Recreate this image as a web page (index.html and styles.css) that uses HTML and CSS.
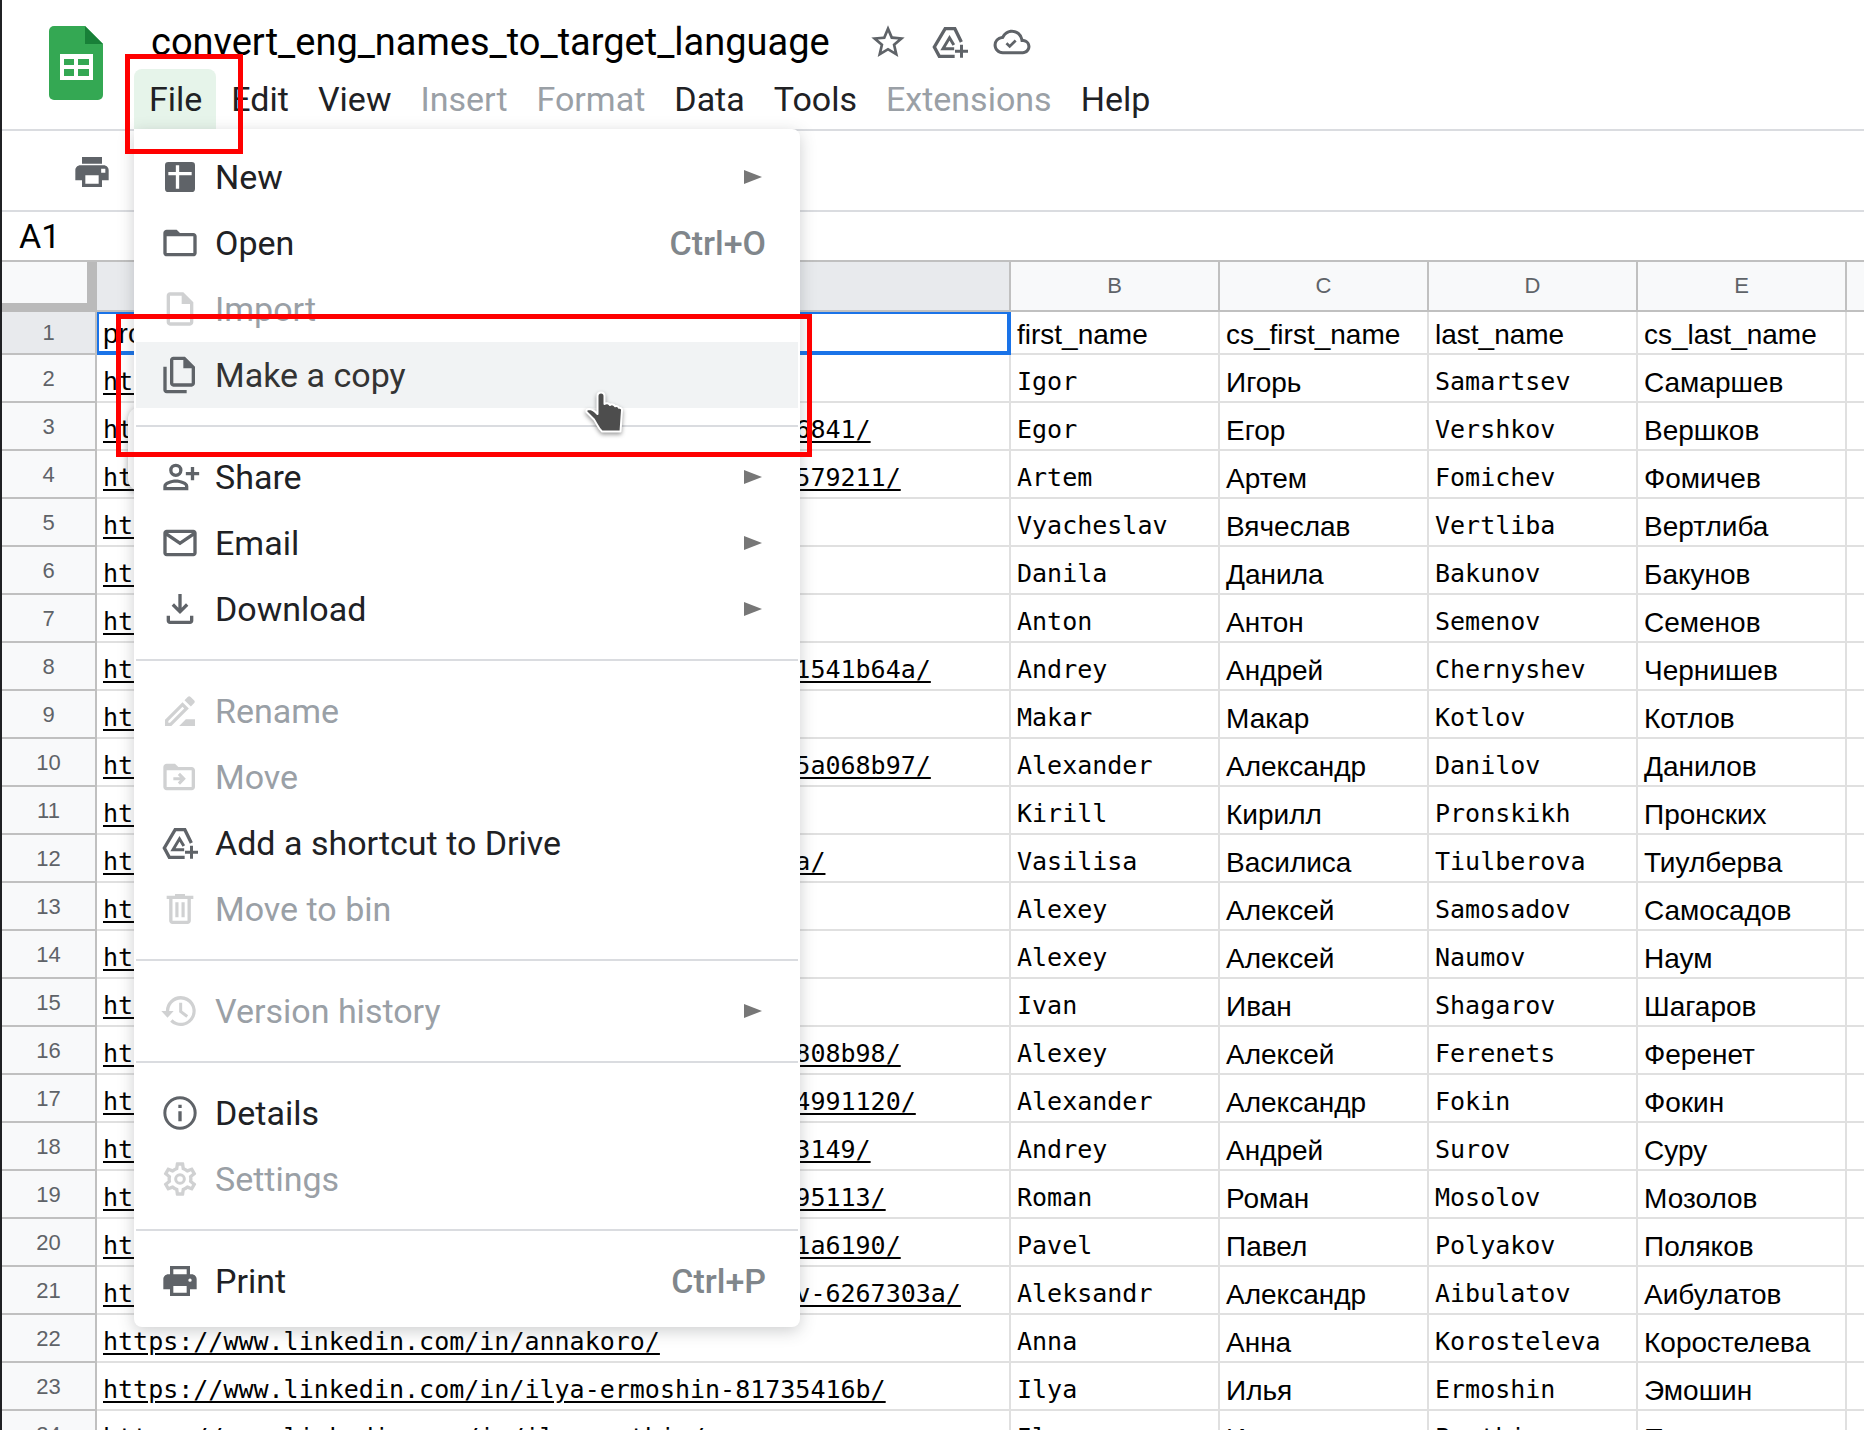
FILE: index.html
```html
<!DOCTYPE html>
<html lang="en">
<head>
    <meta charset="UTF-8">
    <meta name="viewport" content="width=device-width, initial-scale=1.0">
    <title>convert_eng_names_to_target_language</title>
    <link rel="stylesheet" href="styles.css">
</head>
<body>

<!-- Shared icon shapes -->
<svg class="sprite" aria-hidden="true">
    <symbol id="drive-add" viewBox="0 0 24 24">
        <path d="M18.800 12L14.900 4H9.100L2.600 15l3 5.600h9.200" fill="none" stroke="currentColor" stroke-width="2"/>
        <path d="M14.500 16H7.800l3.900-6.500 2.600 4.300" fill="none" stroke="currentColor" stroke-width="1.800"/>
        <path d="M18 13.600v3h-3v1.800h3v3h1.800v-3h3v-1.800h-3v-3z" fill="currentColor"/>
    </symbol>
</svg>

<div id="app">
    <header class="header">
        <svg class="logo" viewBox="0 0 54 74">
            <path d="M5 0h31l18 18v51a5 5 0 0 1-5 5H5a5 5 0 0 1-5-5V5a5 5 0 0 1 5-5z" fill="#34a853"/>
            <path d="M36 0l18 18H36z" fill="#188038"/>
            <path d="M11 28h33v26H11zM15 33v6h10v-6zM29 33v6h11v-6zM15 43v7h10v-7zM29 43v7h11v-7z" fill="#fff" fill-rule="evenodd"/>
        </svg>
        <div class="heading">
            <div class="title-row">
                <h1>convert_eng_names_to_target_language</h1>
                <button class="icon-btn" aria-label="Star">
                    <svg viewBox="0 0 24 24"><path d="M22 9.24l-7.19-.62L12 2 9.19 8.63 2 9.24l5.46 4.73L5.82 21 12 17.27 18.18 21l-1.63-7.03L22 9.24zM12 15.4l-3.76 2.27 1-4.28-3.32-2.88 4.38-.38L12 6.1l1.71 4.04 4.38.38-3.32 2.88 1 4.28L12 15.4z"/></svg>
                </button>
                <button class="icon-btn" aria-label="Add shortcut"><svg><use href="#drive-add"/></svg></button>
                <button class="icon-btn" aria-label="Document status">
                    <svg viewBox="-1 0 26 24"><path d="M19.350 10.040A7.490 7.490 0 0 0 12 4C9.110 4 6.600 5.640 5.350 8.040A5.994 5.994 0 0 0 0 14c0 3.310 2.690 6 6 6h13c2.760 0 5-2.240 5-5 0-2.640-2.050-4.780-4.650-4.960zM19 18H6c-2.210 0-4-1.790-4-4 0-2.050 1.530-3.760 3.560-3.970l1.070-.11.5-.95A5.469 5.469 0 0 1 12 6c2.620 0 4.880 1.860 5.390 4.430l.3 1.500 1.530.11A2.980 2.980 0 0 1 22 15c0 1.650-1.350 3-3 3zm-8.500-4.300l-1.500-1.500-1.200 1.200 2.700 2.700 4.500-4.500-1.200-1.200z"/></svg>
                </button>
            </div>
            <nav class="menubar">
                <div class="menu-root">
                    <button class="active">File</button>

                    <div class="hint"></div>
                    <div class="menu">
                        <button class="item">
                            <svg viewBox="0 0 24 24"><path d="M5 3h14a2 2 0 0 1 2 2v14a2 2 0 0 1-2 2H5a2 2 0 0 1-2-2V5a2 2 0 0 1 2-2zM9.500 5v4H5v2h4.500v8h2v-8H19V9h-7.500V5z"/></svg>
                            <span>New</span><i class="arrow"></i>
                        </button>
                        <button class="item">
                            <svg viewBox="0 0 24 24"><path d="M20 6h-8l-2-2H4c-1.100 0-2 .9-2 2v12c0 1.100.9 2 2 2h16c1.100 0 2-.9 2-2V8c0-1.100-.9-2-2-2zm0 12H4V8h16v10z"/></svg>
                            <span>Open</span><kbd>Ctrl+O</kbd>
                        </button>
                        <button class="item" disabled>
                            <svg viewBox="0 0 24 24"><path d="M14 2H6c-1.100 0-2 .9-2 2v16c0 1.100.9 2 2 2h12c1.100 0 2-.9 2-2V8l-6-6zM6 20V4h7v5h5v11H6z"/></svg>
                            <span>Import</span>
                        </button>
                        <button class="item hover">
                            <svg viewBox="0 0 24 24"><path d="M15 1H8C6.900 1 6 1.900 6 3v14c0 1.100.9 2 2 2h11c1.100 0 2-.9 2-2V7l-6-6zM8 17V3h6v5h5v9H8zM4 7H2v14c0 1.100.9 2 2 2h12v-2H4V7z"/></svg>
                            <span>Make a copy</span>
                        </button>
                        <hr>
                        <button class="item">
                            <svg viewBox="0 0 24 24"><path d="M9.500 12a4 4 0 1 0 0-8 4 4 0 0 0 0 8zm0-6a2 2 0 1 1 0 4 2 2 0 0 1 0-4zM9.500 13.500C6.800 13.500 2 14.800 2 17.500V20h15v-2.500c0-2.700-4.800-4-7.500-4zM15 18H4v-.5c0-.7 2.700-2 5.500-2s5.500 1.300 5.500 2zM18.500 6v3h-3v2h3v3h2v-3h3V9h-3V6z"/></svg>
                            <span>Share</span><i class="arrow"></i>
                        </button>
                        <button class="item">
                            <svg viewBox="0 0 24 24"><path d="M20 4H4c-1.100 0-2 .9-2 2v12c0 1.100.9 2 2 2h16c1.100 0 2-.9 2-2V6c0-1.100-.9-2-2-2zm-.8 2L12 11 4.800 6zM4 18V7.900l8 5.500 8-5.500V18z"/></svg>
                            <span>Email</span><i class="arrow"></i>
                        </button>
                        <button class="item">
                            <svg viewBox="0 0 24 24"><path d="M17 10l-1.400-1.400-2.600 2.600V3h-2v8.200L8.400 8.600 7 10l5 5zM18 16v3H6v-3H4v3c0 1.100.9 2 2 2h12c1.100 0 2-.9 2-2v-3z"/></svg>
                            <span>Download</span><i class="arrow"></i>
                        </button>
                        <hr>
                        <button class="item" disabled>
                            <svg viewBox="0 0 24 24"><path d="M20.400 5.600l-2-2c-.6-.6-1.200-.6-1.800 0L14.700 5.500l3.800 3.800 1.900-1.900c.6-.6.6-1.200 0-1.800zM13.500 6.700L3 17.200V21h3.800L17.300 10.500zM6 19H5v-1l8.500-8.500 1 1zM11.500 21l4-4H21v4z"/></svg>
                            <span>Rename</span>
                        </button>
                        <button class="item" disabled>
                            <svg viewBox="0 0 24 24"><path d="M19 6h-8L9 4H4c-1.100 0-2 .9-2 2v12c0 1.100.9 2 2 2h15c1.100 0 2-.9 2-2V8c0-1.100-.9-2-2-2zm0 12H4V8h15zM12 9.500l-1.300 1.300 1.300 1.300H8v1.900h4l-1.300 1.300L12 16.600l3.500-3.600z"/></svg>
                            <span>Move</span>
                        </button>
                        <button class="item">
                            <svg><use href="#drive-add"/></svg>
                            <span>Add a shortcut to Drive</span>
                        </button>
                        <button class="item" disabled>
                            <svg viewBox="0 0 24 24"><path d="M15 4V3H9v1H4v2h1.500v13c0 1.100.9 2 2 2h9c1.100 0 2-.9 2-2V6H20V4zM16.500 19h-9V6h9zM9.200 8h1.900v9H9.200zm3.700 0h1.900v9h-1.900z"/></svg>
                            <span>Move to bin</span>
                        </button>
                        <hr>
                        <button class="item" disabled>
                            <svg viewBox="0 0 24 24"><path d="M12.500 3a9 9 0 0 0-9 9H.8l3.700 4 3.700-4H5.500a7 7 0 1 1 2 5l-1.400 1.400A9 9 0 1 0 12.500 3zM11.500 7v5.700l4.300 3.300 1.100-1.500-3.600-2.700V7z"/></svg>
                            <span>Version history</span><i class="arrow"></i>
                        </button>
                        <hr>
                        <button class="item">
                            <svg viewBox="0 0 24 24"><path d="M11 7h2v2h-2zm0 4h2v6h-2zm1-9a10 10 0 1 0 0 20 10 10 0 0 0 0-20zm0 18.200a8.200 8.200 0 1 1 0-16.400 8.200 8.200 0 0 1 0 16.400z"/></svg>
                            <span>Details</span>
                        </button>
                        <button class="item" disabled>
                            <svg viewBox="0 0 24 24"><path d="M19.430 12.980c.04-.32.07-.64.07-.98 0-.34-.03-.66-.07-.98l2.110-1.650c.19-.15.24-.42.12-.64l-2-3.460a.5.5 0 0 0-.61-.22l-2.490 1c-.52-.4-1.080-.73-1.690-.98l-.38-2.650A.488.488 0 0 0 14 2h-4c-.25 0-.46.18-.49.42l-.38 2.650c-.61.25-1.170.59-1.690.98l-2.490-1a.5.5 0 0 0-.61.22l-2 3.460c-.13.22-.07.49.12.64l2.110 1.650c-.04.32-.07.65-.07.98 0 .33.03.66.07.98l-2.110 1.650c-.19.15-.24.42-.12.64l2 3.460c.12.22.39.3.61.22l2.490-1c.52.4 1.080.73 1.690.98l.38 2.650c.03.24.24.42.49.42h4c.25 0 .46-.18.49-.42l.38-2.650c.61-.25 1.170-.59 1.690-.98l2.490 1c.23.09.49 0 .61-.22l2-3.460c.12-.22.07-.49-.12-.64l-2.110-1.650zm-1.980-1.710c.04.31.05.52.05.73 0 .21-.02.43-.05.73l-.14 1.130.89.7 1.080.84-.7 1.210-1.270-.51-1.040-.42-.9.68c-.43.32-.84.56-1.250.73l-1.060.43-.16 1.130-.2 1.350h-1.400l-.19-1.350-.16-1.130-1.060-.43c-.43-.18-.83-.41-1.230-.71l-.91-.7-1.060.43-1.270.51-.7-1.210 1.080-.84.89-.7-.14-1.130c-.03-.31-.05-.54-.05-.74s.02-.43.05-.73l.14-1.130-.89-.7-1.080-.84.7-1.210 1.270.51 1.040.42.9-.68c.43-.32.84-.56 1.250-.73l1.060-.43.16-1.130.2-1.350h1.390l.19 1.350.16 1.130 1.060.43c.43.18.83.41 1.230.71l.91.7 1.060-.43 1.270-.51.7 1.210-1.070.85-.89.7.14 1.130zM12 8.500a3.500 3.500 0 1 0 0 7 3.500 3.500 0 0 0 0-7zm0 5.200a1.700 1.700 0 1 1 0-3.400 1.700 1.700 0 0 1 0 3.400z"/></svg>
                            <span>Settings</span>
                        </button>
                        <hr>
                        <button class="item">
                            <svg viewBox="0 0 24 24"><path d="M19 8h-1V3H6v5H5c-1.660 0-3 1.340-3 3v6h4v4h12v-4h4v-6c0-1.660-1.340-3-3-3zM8 5h8v3H8V5zm8 14H8v-4h8v4zm2-6.500a1 1 0 1 1 0-2 1 1 0 0 1 0 2z" fill-rule="evenodd"/></svg>
                            <span>Print</span><kbd>Ctrl+P</kbd>
                        </button>

                        <svg class="cursor" viewBox="0 0 38 43">
                            <path d="M16 1.500c2.200 0 3.500 1.500 3.500 3.500v8c1.500-1.300 4.500-1 5.500 1 1.500-1.200 4.300-.6 5 1.200 2-.6 3.500.2 4 1.600 1.600-.2 3 .6 3 2.200L35.500 40.500H17C13 37 11.500 32 9 28.500L1.500 21C.8 19 2.300 18 4 18c3.500.2 6 2.300 8.500 5V5c0-2 1.300-3.500 3.500-3.500z" fill="#4d4d4d" stroke="#fff" stroke-width="2" stroke-linejoin="round"/>
                        </svg>
                    </div>
                    <div class="mark mark-file"></div>
                    <div class="mark mark-copy"></div>
                </div>
                <button>Edit</button>
                <button>View</button>
                <button disabled>Insert</button>
                <button disabled>Format</button>
                <button>Data</button>
                <button>Tools</button>
                <button disabled>Extensions</button>
                <button>Help</button>
            </nav>
        </div>
    </header>

    <div class="toolbar">
        <button class="icon-btn" aria-label="Print">
            <svg viewBox="0 0 24 24"><path d="M19 8H5c-1.660 0-3 1.340-3 3v6h4v4h12v-4h4v-6c0-1.660-1.340-3-3-3zm-3 11H8v-5h8v5zm4-6.500h-2.500V10H20zM18 3H6v4h12z" fill-rule="evenodd"/></svg>
        </button>
    </div>

    <div class="formula-bar">
        <input type="text" value="A1" aria-label="Name box">
    </div>

    <table class="sheet">
        <colgroup>
            <col class="col-num"><col class="col-a"><col class="col-b"><col class="col-b"><col class="col-b"><col class="col-b"><col>
        </colgroup>
        <thead>
            <tr><th class="corner"></th><th class="selected"></th><th>B</th><th>C</th><th>D</th><th>E</th><th></th></tr>
        </thead>
        <tbody id="rows"></tbody>
    </table>
</div>

<script>
    const site = 'https://www.linkedin.com/in/';

    // profile slug, first_name, cs_first_name, last_name, cs_last_name
    const people = [
        ['igor-samartsev', 'Igor', 'Игорь', 'Samartsev', 'Самаршев'],
        ['egor-vershkov-15b66841', 'Egor', 'Егор', 'Vershkov', 'Вершков'],
        ['artem-fomichev-1b6579211', 'Artem', 'Артем', 'Fomichev', 'Фомичев'],
        ['vertliba', 'Vyacheslav', 'Вячеслав', 'Vertliba', 'Вертлиба'],
        ['danilabakunov', 'Danila', 'Данила', 'Bakunov', 'Бакунов'],
        ['antonsemenov', 'Anton', 'Антон', 'Semenov', 'Семенов'],
        ['andrey-chernyshev-1541b64a', 'Andrey', 'Андрей', 'Chernyshev', 'Чернишев'],
        ['makarkotlov', 'Makar', 'Макар', 'Kotlov', 'Котлов'],
        ['alexander-danilov-5a068b97', 'Alexander', 'Александр', 'Danilov', 'Данилов'],
        ['kpronskikh', 'Kirill', 'Кирилл', 'Pronskikh', 'Пронских'],
        ['vasilisa-tiulberova', 'Vasilisa', 'Василиса', 'Tiulberova', 'Тиулберва'],
        ['samosadov', 'Alexey', 'Алексей', 'Samosadov', 'Самосадов'],
        ['alexeynaumov', 'Alexey', 'Алексей', 'Naumov', 'Наум'],
        ['ivanshagarov', 'Ivan', 'Иван', 'Shagarov', 'Шагаров'],
        ['alexey-ferenets-17808b98', 'Alexey', 'Алексей', 'Ferenets', 'Ференет'],
        ['alexander-fokin-164991120', 'Alexander', 'Александр', 'Fokin', 'Фокин'],
        ['andrey-surov-1ba903149', 'Andrey', 'Андрей', 'Surov', 'Суру'],
        ['roman-mosolov-1a2b95113', 'Roman', 'Роман', 'Mosolov', 'Мозолов'],
        ['pavel-polyakov-1b21a6190', 'Pavel', 'Павел', 'Polyakov', 'Поляков'],
        ['aleksandr-aibulatov-6267303a', 'Aleksandr', 'Александр', 'Aibulatov', 'Аибулатов'],
        ['annakoro', 'Anna', 'Анна', 'Korosteleva', 'Коростелева'],
        ['ilya-ermoshin-81735416b', 'Ilya', 'Илья', 'Ermoshin', 'Эмошин'],
        ['ilya-puthin', 'Ilya', 'Илья', 'Posthin', 'Постин']
    ];

    let html = '<tr class="names"><th>1</th><td class="current">profile_url</td><td>first_name</td>' +
        '<td>cs_first_name</td><td>last_name</td><td>cs_last_name</td><td></td></tr>';

    people.forEach((p, i) => {
        const url = site + p[0] + '/';
        html += `<tr><th>${i + 2}</th><td class="mono"><a href="${url}">${url}</a></td>` +
            `<td class="mono">${p[1]}</td><td>${p[2]}</td><td class="mono">${p[3]}</td><td>${p[4]}</td><td></td></tr>`;
    });

    document.getElementById('rows').innerHTML = html;
</script>

</body>
</html>
```
FILE: styles.css
```css
* {
    margin: 0;
    padding: 0;
    box-sizing: border-box;
}

body {
    height: 100vh;
    overflow: hidden;
    background-color: #fff;
    font-family: Roboto, "Liberation Sans", sans-serif;
    color: #202124;
}

button {
    border: none;
    background: none;
    font: inherit;
    color: inherit;
}

svg {
    fill: currentColor;
}

.sprite {
    display: none;
}

#app {
    height: 100vh;
    border-left: 2px solid #202124;
    overflow: hidden;
}

/* Header */
.header {
    display: flex;
    height: 131px;
    padding-left: 47px;
    border-bottom: 2px solid #dadce0;
}

.logo {
    width: 54px;
    height: 74px;
    margin-top: 26px;
}

.heading {
    margin-left: 31px;
}

.title-row {
    display: flex;
    align-items: center;
    height: 69px;
    padding: 14px 0 0 17px;
}

.title-row h1 {
    margin-right: 38px;
    font-size: 38px;
    font-weight: 400;
    line-height: 52px;
    color: #000;
}

.title-row .icon-btn {
    margin-right: 22px;
}

.icon-btn {
    color: #5f6368;
}

.icon-btn svg {
    display: block;
    width: 40px;
    height: 40px;
}

.menubar {
    display: flex;
    height: 60px;
    font-size: 34px;
}

.menubar > button,
.menubar .active {
    height: 60px;
    padding: 0 14px 0 15px;
    color: #202124;
}

.menubar > button:disabled {
    color: #9aa0a6;
}

.menubar .active {
    background-color: #e6f4ea;
    border-radius: 8px 8px 0 0;
}

.menu-root {
    position: relative;
}

/* File menu */
.menu {
    position: absolute;
    z-index: 2;
    top: 60px;
    left: 0;
    width: 666px;
    padding: 15px 2px 13px;
    background-color: #fff;
    border-radius: 0 8px 8px 8px;
    box-shadow: 0 4px 16px rgba(60, 64, 67, 0.25);
}

.menu hr {
    height: 2px;
    margin: 17px 0;
    border: none;
    background-color: #dadce0;
}

/* Card left open behind the menu */
.hint {
    position: absolute;
    z-index: 1;
    top: 338px;
    left: -6px;
    width: 120px;
    height: 84px;
    background-color: #fff;
    border-radius: 12px;
    box-shadow: 0 2px 6px rgba(60, 64, 67, 0.4);
}

.item {
    display: flex;
    align-items: center;
    width: 100%;
    height: 66px;
    padding: 0 32px 0 24px;
    line-height: 38px;
    text-align: left;
}

.item svg {
    width: 40px;
    height: 40px;
    margin-right: 15px;
    color: #5f6368;
}

.item span {
    flex: 1;
}

.item:disabled {
    color: #9aa0a6;
}

.item:disabled svg {
    color: #d0d1d2;
}

.item.hover {
    background-color: #f1f3f4;
    color: #333;
}

.item kbd {
    font-family: inherit;
    font-weight: 500;
    color: #80868b;
}

.arrow {
    margin-right: 4px;
    border: 7px solid transparent;
    border-left: 18px solid #777;
    border-right: none;
}

.cursor {
    position: absolute;
    top: 262px;
    left: 451px;
    width: 38px;
    height: 43px;
    overflow: visible;
    filter: drop-shadow(0 2px 2px rgba(0, 0, 0, 0.4));
}

/* Red highlight frames */
.mark {
    position: absolute;
    z-index: 3;
    border: 5px solid #f00;
    pointer-events: none;
}

.mark-file {
    top: -15px;
    left: -9px;
    width: 118px;
    height: 100px;
}

.mark-copy {
    top: 245px;
    left: -18px;
    width: 696px;
    height: 143px;
}

/* Toolbar and name box */
.toolbar {
    display: flex;
    align-items: center;
    height: 81px;
    padding: 2px 0 0 70px;
    border-bottom: 2px solid #dadce0;
}

.formula-bar {
    height: 50px;
    border-bottom: 2px solid #c0c0c0;
}

.formula-bar input {
    width: 110px;
    height: 48px;
    padding-left: 17px;
    border: none;
    outline: none;
    font: 34px Roboto, sans-serif;
    color: #000;
}

/* Sheet */
.sheet {
    width: 100%;
    table-layout: fixed;
    border-collapse: separate;
    border-spacing: 0;
    font-family: "Liberation Sans", Arial, sans-serif;
    font-size: 28px;
    color: #000;
}

.col-num {
    width: 95px;
}

.col-a {
    width: 914px;
}

.col-b {
    width: 209px;
}

.sheet th {
    padding-top: 2px;
    border-right: 2px solid #c0c0c0;
    border-bottom: 2px solid #c0c0c0;
    background-color: #f8f9fa;
    font-size: 22px;
    font-weight: 400;
    color: #5f6368;
}

.sheet thead th {
    height: 50px;
    padding-top: 0;
}

.sheet .corner {
    border-right: 10px solid #bababa;
    border-bottom: 9px solid #bababa;
}

.sheet .selected,
.sheet .names th {
    background-color: #e8eaed;
}

.sheet .names th {
    padding-top: 0;
}

.sheet td {
    height: 48px;
    padding: 10px 0 0 6px;
    border-right: 2px solid #e0e0e0;
    border-bottom: 2px solid #e0e0e0;
    line-height: 36px;
    white-space: nowrap;
    overflow: hidden;
}

.sheet .names td {
    height: 43px;
    padding-top: 4px;
}

.sheet .names .current {
    border: 2px solid #1a73e8;
    border-width: 2px 4px 4px 2px;
    padding: 2px 0 0 4px;
    line-height: 35px;
}

.sheet tr > :last-child {
    border-right: none;
}

.sheet .mono {
    padding-top: 9px;
    padding-bottom: 1px;
    font-family: "DejaVu Sans Mono", "Liberation Mono", monospace;
    font-size: 25px;
}

.sheet a {
    color: inherit;
    text-underline-offset: 3px;
}
```
